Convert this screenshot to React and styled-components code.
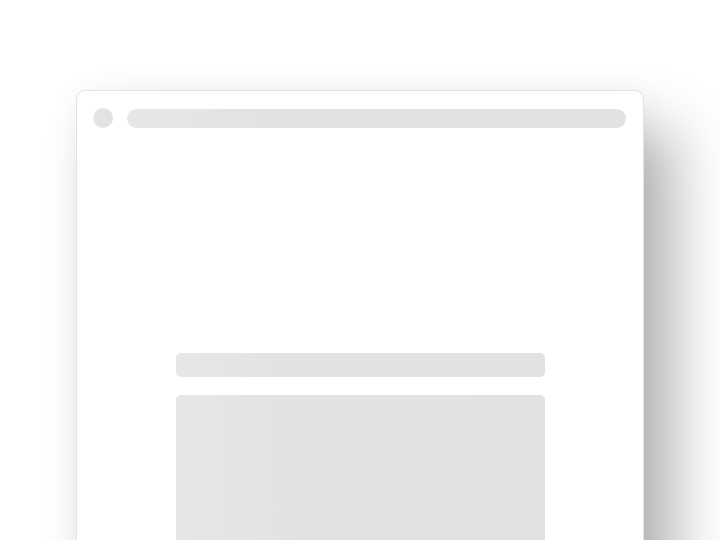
import React from "react";
import styled, { createGlobalStyle } from "styled-components";

const Global = createGlobalStyle`
  html, body {
    margin: 0;
    padding: 0;
    background: #ffffff;
    font-family: "Liberation Sans", Arial, sans-serif;
    overflow: hidden;
  }
`;

const Page = styled.div`
  height: 540px;
  overflow: hidden;
  display: flex;
  justify-content: center;
  padding-top: 90px;
  box-sizing: border-box;
`;

const Card = styled.div`
  width: 568px;
  min-height: 640px;
  box-sizing: border-box;
  background: #ffffff;
  border: 1px solid #e2e2e2;
  border-radius: 9px;
  box-shadow: 30px 40px 60px rgba(0, 0, 0, 0.3), 0 0 30px rgba(0, 0, 0, 0.04);
  display: flex;
  flex-direction: column;
`;

const Header = styled.div`
  display: flex;
  align-items: center;
  gap: 14px;
  padding: 17px 17px 0 16px;
`;

const skeleton = `
  background: linear-gradient(90deg, #e7e7e7 0%, #e3e3e3 25%, #e2e2e2 100%);
`;

const Avatar = styled.div`
  width: 20px;
  height: 20px;
  border-radius: 50%;
  flex: none;
  ${skeleton}
`;

const TopBar = styled.div`
  flex: 1;
  height: 19px;
  border-radius: 10px;
  ${skeleton}
`;

const Body = styled.div`
  display: flex;
  justify-content: center;
  padding-top: 225px;
`;

const Column = styled.div`
  width: 369px;
  display: flex;
  flex-direction: column;
  gap: 18px;
`;

const TitleBar = styled.div`
  height: 24px;
  border-radius: 5px;
  ${skeleton}
`;

const Block = styled.div`
  height: ${(p) => p.$h}px;
  border-radius: 5px;
  ${skeleton}
`;

export default function App() {
  return (
    <>
      <Global />
      <Page>
        <Card>
          <Header>
            <Avatar />
            <TopBar />
          </Header>
          <Body>
            <Column>
              <TitleBar />
              <Block $h={220} />
            </Column>
          </Body>
        </Card>
      </Page>
    </>
  );
}
